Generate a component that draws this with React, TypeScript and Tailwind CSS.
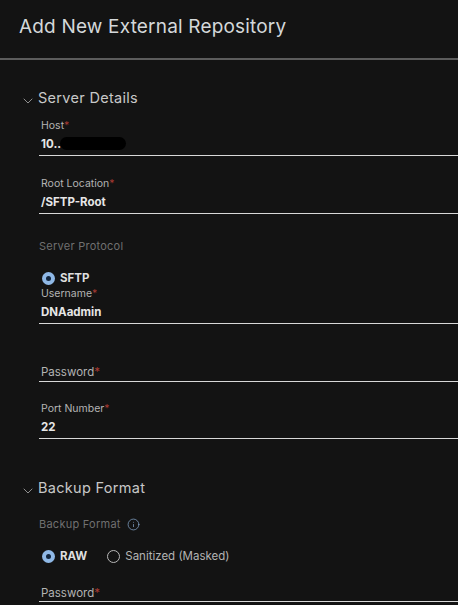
import React from 'react';
import { ChevronDown, Info } from 'lucide-react';

function Field({ label, value, className }: { label: string; value?: string; className?: string }) {
  return (
    <div className={`border-b border-[#d8d8d8] pt-[1px] ${className ?? ''}`}>
      <div className={`pl-[2px] leading-[14px] text-[#b4b4b4] ${value ? 'text-[10.5px]' : 'text-[11.5px]'}`}>
        {label}
        <span className="text-[#a83a32]">*</span>
      </div>
      {value && <div className="pl-[2px] mt-[3px] h-[19px] leading-[16px] text-[11.5px] font-bold text-[#e6e6e6]">{value}</div>}
    </div>
  );
}

function Radio({ label, checked }: { label: string; checked?: boolean }) {
  return (
    <div className="flex items-center gap-[5px] leading-[14px]">
      {checked ? (
        <span className="w-[13px] h-[13px] rounded-full bg-[#8fb8e6] flex items-center justify-center">
          <span className="w-[5px] h-[5px] rounded-full bg-[#12263f]" />
        </span>
      ) : (
        <span className="w-[13px] h-[13px] rounded-full border border-[#b8b8b8]" />
      )}
      <span className={checked ? 'text-[11.5px] font-bold text-[#dedede]' : 'text-[11.5px] text-[#b4b4b4]'}>{label}</span>
    </div>
  );
}

function Section({ title }: { title: string }) {
  return (
    <div className="flex items-center h-[20px]">
      <ChevronDown className="w-[16px] h-[16px] ml-[20px] mr-[2px] mt-[5px] text-[#a8a8a8]" strokeWidth={1.25} />
      <span className="text-[14.5px] text-[#c8c8c8] tracking-[0.3px]">{title}</span>
    </div>
  );
}

export default function App() {
  return (
    <div className="w-[458px] h-[605px] overflow-hidden bg-[#131313] font-['Inter',sans-serif]">
      <div className="h-[60px] border-b-2 border-[#5c5c5c] pl-[19px] pt-[13px]">
        <h1 className="text-[19px] leading-[28px] font-normal text-[#d4d8da] tracking-[0.18px]">Add New External Repository</h1>
      </div>

      <div className="pt-[28px]">
        <Section title="Server Details" />
        <div className="pl-[39px] flex flex-col">
          <div className="relative mt-[10px]">
            <Field label="Host" value="10.." />
            <span className="absolute left-[21px] top-[19px] w-[66px] h-[13px] rounded-full bg-black" />
          </div>
          <Field label="Root Location" value="/SFTP-Root" className="mt-[20px]" />
          <div className="mt-[25px] text-[11px] leading-[14px] text-[#707070] tracking-[0.25px]">Server Protocol</div>
          <div className="mt-[18px] ml-[3px]">
            <Radio label="SFTP" checked />
          </div>
          <Field label="Username" value="DNAadmin" className="mt-[1px]" />
          <Field label="Password" className="mt-[40px] pb-[2px]" />
          <Field label="Port Number" value="22" className="mt-[19px]" />
        </div>
      </div>

      <div className="mt-[39px]">
        <Section title="Backup Format" />
        <div className="pl-[39px] flex flex-col">
          <div className="mt-[19px] flex items-center gap-[6px] text-[11px] leading-[14px] text-[#707070] tracking-[0.25px]">
            Backup Format
            <Info className="w-[13px] h-[13px] text-[#8fb0d8]" strokeWidth={1.25} />
          </div>
          <div className="mt-[18px] ml-[3px] flex items-center gap-[20px]">
            <Radio label="RAW" checked />
            <Radio label="Sanitized (Masked)" />
          </div>
          <Field label="Password" className="mt-[22px] pb-[1px]" />
        </div>
      </div>
    </div>
  );
}
